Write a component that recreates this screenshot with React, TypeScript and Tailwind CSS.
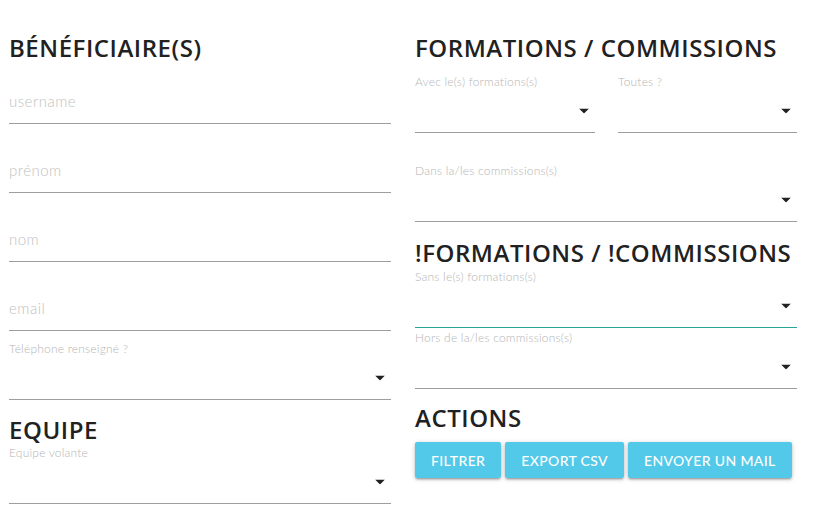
import { ReactNode } from 'react';

const heading = "font-['Open_Sans',sans-serif] font-semibold text-[24px] text-[#212121] tracking-[0.55px]";
const body = "font-['Lato','Liberation_Sans',sans-serif]";

function Arrow() {
  return (
    <svg width="10" height="5" viewBox="0 0 10 5" className="absolute right-[6px] top-1/2 -translate-y-1/2">
      <path d="M0 0 L10 0 L5 5 Z" fill="#212121" />
    </svg>
  );
}

function TextInput({ placeholder, className = '' }: { placeholder: string; className?: string }) {
  return (
    <div className={`h-[45px] border-b border-[#9e9e9e] flex items-center ${className}`}>
      <span className={`${body} font-light text-[15px] tracking-[0.5px] text-[#c2c2c2]`}>{placeholder}</span>
    </div>
  );
}

function Label({ children, className = '' }: { children: ReactNode; className?: string }) {
  return (
    <div
      className={`${body} font-light text-[12px] tracking-[0.2px] leading-[14px] h-[14px] text-[#b5b5b5] whitespace-nowrap ${className}`}
    >
      {children}
    </div>
  );
}

function Select({ active = false }: { active?: boolean }) {
  return (
    <div className={`relative h-[44px] border-b ${active ? 'border-[#26a69a]' : 'border-[#9e9e9e]'}`}>
      <Arrow />
    </div>
  );
}

function Button({ children }: { children: ReactNode }) {
  return (
    <button
      className={`${body} h-[36px] px-4 whitespace-nowrap rounded-[2px] bg-[#52c9e8] text-white text-[14px] font-medium tracking-[0.35px] uppercase shadow-[0_2px_2px_rgba(0,0,0,0.14),0_3px_1px_-2px_rgba(0,0,0,0.12),0_1px_5px_rgba(0,0,0,0.2)]`}
    >
      {children}
    </button>
  );
}

export default function App() {
  return (
    <div className="w-[816px] h-[531px] bg-white overflow-hidden pl-[9px] pt-[28px]">
      <div className="grid grid-cols-[382px_382px] gap-x-[24px]">
        {/* Bénéficiaires */}
        <div className="flex flex-col">
          <h2 className={`${heading} leading-[40px]`}>BÉNÉFICIAIRE(S)</h2>
          <TextInput placeholder="username" className="mt-[11px]" />
          <TextInput placeholder="prénom" className="mt-[24px]" />
          <TextInput placeholder="nom" className="mt-[24px]" />
          <TextInput placeholder="email" className="mt-[24px]" />
          <Label className="mt-[11px]">Téléphone renseigné ?</Label>
          <Select />
          <h2 className={`${heading} leading-[32px] mt-[14px]`}>EQUIPE</h2>
          <Label>Equipe volante</Label>
          <Select />
        </div>

        {/* Formations / commissions */}
        <div className="flex flex-col">
          <h2 className={`${heading} leading-[40px]`}>FORMATIONS / COMMISSIONS</h2>
          <div className="grid grid-cols-[180px_179px] gap-x-[23px] mt-[7px]">
            <div>
              <Label>Avec le(s) formations(s)</Label>
              <Select />
            </div>
            <div>
              <Label>Toutes ?</Label>
              <Select />
            </div>
          </div>
          <Label className="mt-[31px]">Dans la/les commissions(s)</Label>
          <Select />
          <h2 className={`${heading} leading-[33px] mt-[14px]`}>!FORMATIONS / !COMMISSIONS</h2>
          <Label className="mt-[1px]">Sans le(s) formations(s)</Label>
          <Select active />
          <Label className="mt-[3px]">Hors de la/les commissions(s)</Label>
          <Select />
          <h2 className={`${heading} leading-[32px] mt-[13px]`}>ACTIONS</h2>
          <div className="flex gap-[4px] mt-[8px]">
            <Button>Filtrer</Button>
            <Button>Export CSV</Button>
            <Button>Envoyer un mail</Button>
          </div>
        </div>
      </div>
    </div>
  );
}
